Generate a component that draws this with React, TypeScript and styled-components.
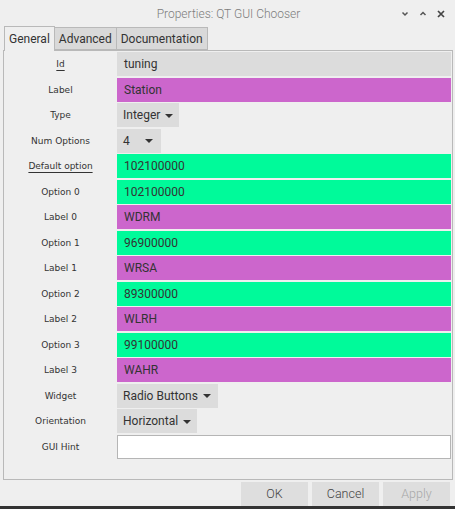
import React from "react";
import styled, { createGlobalStyle } from "styled-components";

type FieldKind = "gray" | "pink" | "green" | "white";

type RowType = {
   label: string
   underline?: boolean
   kind: FieldKind | "combo"
   value: string
   comboWidth?: number
   spaced?: boolean
}

const rows: RowType[] = [
   { label: "Id", underline: true, kind: "gray", value: "tuning" },
   { label: "Label", kind: "pink", value: "Station" },
   { label: "Type", kind: "combo", value: "Integer", comboWidth: 62 },
   { label: "Num Options", kind: "combo", value: "4", comboWidth: 44, spaced: true },
   { label: "Default option", underline: true, kind: "green", value: "102100000" },
   { label: "Option 0", kind: "green", value: "102100000" },
   { label: "Label 0", kind: "pink", value: "WDRM" },
   { label: "Option 1", kind: "green", value: "96900000" },
   { label: "Label 1", kind: "pink", value: "WRSA" },
   { label: "Option 2", kind: "green", value: "89300000" },
   { label: "Label 2", kind: "pink", value: "WLRH" },
   { label: "Option 3", kind: "green", value: "99100000" },
   { label: "Label 3", kind: "pink", value: "WAHR" },
   { label: "Widget", kind: "combo", value: "Radio Buttons", comboWidth: 101 },
   { label: "Orientation", kind: "combo", value: "Horizontal", comboWidth: 80 },
   { label: "GUI Hint", kind: "white", value: "" },
];

const fieldColors: Record<FieldKind, string> = {
   gray: "#dcdcdc",
   pink: "#cc66cc",
   green: "#00fa9a",
   white: "#ffffff",
};

const GlobalStyle = createGlobalStyle`
   body {
      margin: 0;
      background: #efefef;
   }
`

const Caret = () => (
   <svg width="8" height="4" viewBox="0 0 8 4">
      <path d="M0 0 L8 0 L4 4 Z" fill="#333" />
   </svg>
);

export default function App() {
   return (
      <Window>
         <GlobalStyle />
         <TitleBar>
            <Title>Properties: QT GUI Chooser</Title>
            <Controls>
               <svg width="10" height="8" viewBox="0 0 10 8">
                  <path d="M2.5 2.5 L5 5 L7.5 2.5" stroke="#555" strokeWidth="1.5" fill="none" />
               </svg>
               <svg width="10" height="8" viewBox="0 0 10 8">
                  <path d="M2.5 5 L5 2.5 L7.5 5" stroke="#555" strokeWidth="1.5" fill="none" />
               </svg>
               <svg width="10" height="10" viewBox="0 0 10 10">
                  <path d="M2 2 L8 8 M8 2 L2 8" stroke="#444" strokeWidth="1.7" fill="none" />
               </svg>
            </Controls>
         </TitleBar>

         <Tabs>
            <Tab $active>General</Tab>
            <Tab>Advanced</Tab>
            <Tab>Documentation</Tab>
         </Tabs>

         <Pane>
            <Form>
               {rows.map((row) => (
                  <React.Fragment key={row.label}>
                     <Label $underline={row.underline}>{row.label}</Label>
                     {row.kind === "combo" ? (
                        <ComboCell>
                           <Combo $width={row.comboWidth || 60} $spaced={row.spaced}>
                              <span>{row.value}</span>
                              <Caret />
                           </Combo>
                        </ComboCell>
                     ) : (
                        <Field $kind={row.kind}>{row.value}</Field>
                     )}
                  </React.Fragment>
               ))}
            </Form>
         </Pane>

         <Footer>
            <Button>OK</Button>
            <Button>Cancel</Button>
            <Button $disabled>Apply</Button>
         </Footer>
         <BottomEdge />
      </Window>
   );
}

const Window = styled.div`
   width: 455px;
   height: 509px;
   display: flex;
   flex-direction: column;
   background: #efefef;
   overflow: hidden;
`

const TitleBar = styled.div`
   height: 26px;
   flex-shrink: 0;
   display: flex;
   align-items: center;
   justify-content: center;
   position: relative;
`

const Title = styled.div`
   font-family: Roboto, "Liberation Sans", sans-serif;
   font-size: 12px;
   font-weight: 300;
   color: #7d7d7d;
   margin-left: 2px;
   margin-top: 2px;
`

const Controls = styled.div`
   position: absolute;
   right: 9px;
   top: 9px;
   display: flex;
   align-items: center;
   gap: 8px;
`

const Tabs = styled.div`
   height: 24px;
   flex-shrink: 0;
   display: flex;
   align-items: flex-end;
   padding-left: 4px;
   position: relative;
   z-index: 1;
`

const Tab = styled.div<{ $active?: boolean }>`
   font-family: Roboto, "Liberation Sans", sans-serif;
   font-size: 12px;
   color: #333;
   padding: 0 4px;
   height: ${(p) => (p.$active ? "25px" : "23px")};
   line-height: ${(p) => (p.$active ? "24px" : "22px")};
   margin-bottom: ${(p) => (p.$active ? "-1px" : "0")};
   background: ${(p) => (p.$active ? "#efefef" : "#d9d9d9")};
   border: 1px solid #b9b9b9;
   border-bottom: ${(p) => (p.$active ? "none" : "1px solid #b9b9b9")};
   box-sizing: border-box;
   white-space: nowrap;
   & + & {
      border-left: none;
   }
`

const Pane = styled.div`
   margin: 0 2px 0 3px;
   height: 430px;
   flex-shrink: 0;
   border: 1px solid #b9b9b9;
   box-sizing: border-box;
   padding: 1px 1px 0 0;
`

const Form = styled.div`
   display: grid;
   grid-template-columns: 113px 1fr;
   grid-auto-rows: 24px;
   row-gap: 1.53px;
`

const Label = styled.div<{ $underline?: boolean }>`
   font-family: "DejaVu Sans", sans-serif;
   font-size: 9px;
   color: #333;
   display: flex;
   align-items: center;
   justify-content: center;
   white-space: nowrap;
   text-decoration: ${(p) => (p.$underline ? "underline" : "none")};
   text-underline-offset: 3px;
`

const Field = styled.div<{ $kind: FieldKind }>`
   background: ${(p) => fieldColors[p.$kind]};
   border: 1px solid ${(p) => (p.$kind === "white" ? "#b5b5b5" : "transparent")};
   box-sizing: border-box;
   font-family: Roboto, "Liberation Sans", sans-serif;
   font-size: 12px;
   color: #333;
   display: flex;
   align-items: center;
   padding-left: 6px;
`

const ComboCell = styled.div`
   display: flex;
`

const Combo = styled.div<{ $width: number; $spaced?: boolean }>`
   width: ${(p) => p.$width}px;
   flex-shrink: 0;
   background: #dcdcdc;
   font-family: Roboto, "Liberation Sans", sans-serif;
   font-size: 12px;
   color: #333;
   display: flex;
   align-items: center;
   gap: ${(p) => (p.$spaced ? "15px" : "5px")};
   padding-left: 6px;
   box-sizing: border-box;
   white-space: nowrap;
   svg {
      margin-top: 1px;
   }
`

const Footer = styled.div`
   flex: 1;
   display: flex;
   justify-content: flex-end;
   align-items: center;
   gap: 4px;
   padding-right: 5px;
   padding-top: 1px;
`

const Button = styled.div<{ $disabled?: boolean }>`
   width: 67px;
   height: 24px;
   background: #dedede;
   font-family: Roboto, "Liberation Sans", sans-serif;
   font-size: 12.5px;
   font-weight: 300;
   color: ${(p) => (p.$disabled ? "#a8a8a8" : "#444")};
   display: flex;
   align-items: center;
   justify-content: center;
`

const BottomEdge = styled.div`
   height: 3px;
   flex-shrink: 0;
   background: #333;
`
